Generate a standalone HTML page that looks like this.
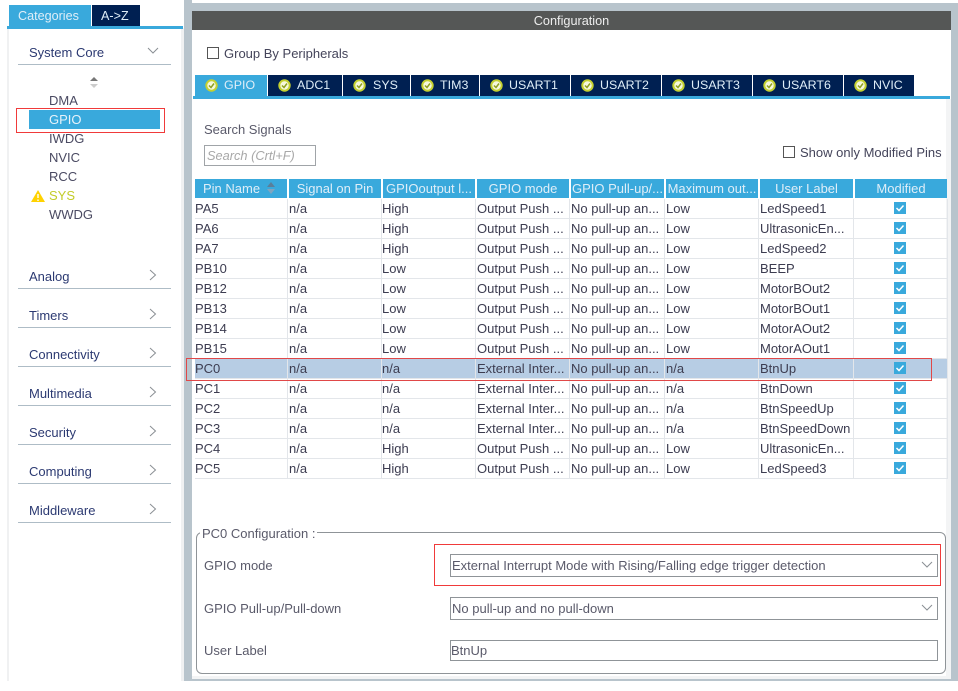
<!DOCTYPE html>
<html><head><meta charset="utf-8"><style>
html,body{margin:0;padding:0;background:#fff}
#p{position:relative;width:958px;height:691px;overflow:hidden;background:#fff;font-family:"Liberation Sans",Arial,sans-serif;font-size:13px;color:#3c3f58}
#p div,#p span,#p svg{position:absolute;white-space:nowrap;box-sizing:border-box}
.b{background:#39a9dc}
.n{background:#002052}
.t{height:21px;top:75px;color:#dfeef8;line-height:21px;font-size:12.4px;letter-spacing:.05px}
.t span{top:0}
.t svg{top:3px;left:10px}
.cat{left:29px;color:#2c3a72;font-size:13px;line-height:16px;margin-top:1px}
.ln{left:18px;width:153px;height:1px;background:#aebcc6}
.it{left:49px;font-size:13px;line-height:16px;color:#4a4a62;margin-top:1px}
.h{top:179px;height:19px;background:#39a9dc;color:#dfeef8;text-align:center;line-height:19px;font-size:13px}
.r{left:195px;width:753px;height:20px;border-bottom:1px solid #e3e6ea}
.r span{top:0;line-height:19px;font-size:13px;color:#3c3c50}
.r span:nth-child(1){left:0}
.r span:nth-child(2){left:94px}
.r span:nth-child(3){left:187px}
.r span:nth-child(4){left:282px}
.r span:nth-child(5){left:376px}
.r span:nth-child(6){left:471px}
.r span:nth-child(7){left:565px}
.r i{position:absolute;width:12px;height:12px;left:699px;top:3px;background:#39a9dc}
.r svg{left:699px;top:3px}
.v{top:199px;width:1px;height:280px;background:#e3e6ea}
.f{color:#5a5a6a;font-size:13px;line-height:16px;margin-top:1px}
.box{border:1px solid #8f9498;background:#fff;margin-top:0}
</style></head><body><div id="p">
<svg width="0" height="0"><defs>
<g id="c"><circle cx="6.5" cy="7.500" r="5.200" fill="#f6f8dc" stroke="#c4d030" stroke-width="2"/><path d="M4 7.500L6 9.500L9 5.500" fill="none" stroke="#8fa020" stroke-width="1.500"/></g>
<path id="k" d="M2.500 6L5 8.500L9.500 3.500" fill="none" stroke="#fff" stroke-width="1.500"/>
</defs></svg>
<div style="left:184px;top:0;width:8px;height:681px;background:#b8c4cc"></div>
<div style="left:184px;top:3px;width:774px;height:8px;background:#b8c4cc"></div>
<div style="left:951px;top:3px;width:7px;height:678px;background:#b8c4cc"></div>
<div style="left:192px;top:679px;width:766px;height:2px;background:#b8c4cc"></div>
<div style="left:192px;top:676px;width:759px;height:3px;background:#f3f4f5"></div>
<div style="left:946px;top:99px;width:5px;height:577px;background:#f3f4f5"></div>
<div style="left:7px;top:28px;width:2px;height:653px;background:#f0f1f2"></div>
<div style="left:181px;top:28px;width:3px;height:653px;background:#f0f1f2"></div>

<div class="b" style="left:9px;top:5px;width:82px;height:21px;color:#dfeef8;font-size:12.600px;line-height:22px;padding-left:9px">Categories</div>
<div class="n" style="left:92px;top:5px;width:48px;height:21px;color:#dfeef8;font-size:12.600px;line-height:22px;padding-left:9px">A-&gt;Z</div>
<div class="b" style="left:7px;top:26px;width:176px;height:3px"></div>

<div class="cat" style="top:44px">System Core</div>
<svg style="left:147px;top:47px" width="12" height="8"><path d="M1 1L6 6L11 1" fill="none" stroke="#8a8f94" stroke-width="1"/></svg>
<div class="ln" style="top:64px"></div>
<svg style="left:88px;top:76px" width="12" height="13"><path d="M6 1L10 5H2Z" fill="#777"/><path d="M6 12L10 8H2Z" fill="#ccc"/></svg>
<div class="it" style="top:92px">DMA</div>
<div class="b" style="left:29px;top:110px;width:131px;height:19px"></div>
<div class="it" style="top:111px;color:#e6f2fa">GPIO</div>
<div style="left:16px;top:108px;width:149px;height:25px;border:1px solid #f03a3a"></div>
<div class="it" style="top:130px">IWDG</div>
<div class="it" style="top:149px">NVIC</div>
<div class="it" style="top:168px">RCC</div>
<svg style="left:31px;top:190px" width="14" height="12"><path d="M7 0L14 12H0Z" fill="#ffd200"/><path d="M7 4V8M7 9.500V11" stroke="#fff" stroke-width="1.400"/></svg>
<div class="it" style="top:187px;color:#c3cc28">SYS</div>
<div class="it" style="top:206px">WWDG</div>

<div class="cat" style="top:268px">Analog</div><div class="ln" style="top:288px"></div>
<div class="cat" style="top:307px">Timers</div><div class="ln" style="top:327px"></div>
<div class="cat" style="top:346px">Connectivity</div><div class="ln" style="top:366px"></div>
<div class="cat" style="top:385px">Multimedia</div><div class="ln" style="top:405px"></div>
<div class="cat" style="top:424px">Security</div><div class="ln" style="top:444px"></div>
<div class="cat" style="top:463px">Computing</div><div class="ln" style="top:483px"></div>
<div class="cat" style="top:502px">Middleware</div><div class="ln" style="top:522px"></div>
<svg style="left:149px;top:269px" width="8" height="246"><g fill="none" stroke="#8a8f94"><path d="M1 1L6.500 6L1 11"/><path d="M1 40L6.500 45L1 50"/><path d="M1 79L6.500 84L1 89"/><path d="M1 118L6.500 123L1 128"/><path d="M1 157L6.500 162L1 167"/><path d="M1 196L6.500 201L1 206"/><path d="M1 235L6.500 240L1 245"/></g></svg>

<div style="left:192px;top:11px;width:759px;height:19px;background:#555756;color:#eee;text-align:center;line-height:20px;font-size:12.700px">Configuration</div>
<div style="left:207px;top:47px;width:12px;height:12px;border:1px solid #555"></div>
<div class="f" style="left:224px;top:45px;color:#44445a">Group By Peripherals</div>

<div class="b t" style="left:195px;width:72px"><svg width="14" height="14"><use href="#c"/></svg><span style="left:29px">GPIO</span></div>
<div class="n t" style="left:268px;width:74px"><svg width="14" height="14"><use href="#c"/></svg><span style="left:29px">ADC1</span></div>
<div class="n t" style="left:343px;width:67px"><svg width="14" height="14"><use href="#c"/></svg><span style="left:30px">SYS</span></div>
<div class="n t" style="left:411px;width:68px"><svg width="14" height="14"><use href="#c"/></svg><span style="left:29px">TIM3</span></div>
<div class="n t" style="left:480px;width:90px"><svg width="14" height="14"><use href="#c"/></svg><span style="left:29px">USART1</span></div>
<div class="n t" style="left:571px;width:90px"><svg width="14" height="14"><use href="#c"/></svg><span style="left:29px">USART2</span></div>
<div class="n t" style="left:662px;width:90px"><svg width="14" height="14"><use href="#c"/></svg><span style="left:29px">USART3</span></div>
<div class="n t" style="left:753px;width:90px"><svg width="14" height="14"><use href="#c"/></svg><span style="left:29px">USART6</span></div>
<div class="n t" style="left:844px;width:70px"><svg width="14" height="14"><use href="#c"/></svg><span style="left:29px">NVIC</span></div>
<div class="b" style="left:193px;top:96px;width:757px;height:3px"></div>

<div class="f" style="left:204px;top:121px">Search Signals</div>
<div style="left:204px;top:145px;width:112px;height:21px;border:1px solid #a0a4a8;color:#a8a8a8;font-style:italic;font-size:12.800px;line-height:19px;padding-left:2px">Search (Crtl+F)</div>
<div style="left:783px;top:146px;width:12px;height:12px;border:1px solid #555"></div>
<div class="f" style="left:800px;top:144px;color:#44445a">Show only Modified Pins</div>

<div class="h" style="left:195px;width:92px;text-align:left;padding-left:8px">Pin Name</div>
<svg style="left:266px;top:181px" width="10" height="14"><path d="M5 1L9 6H1Z" fill="#5a7f9a"/><path d="M5 13L9 8H1Z" fill="#7fa5c0"/></svg>
<div class="h" style="left:289px;width:92px">Signal on Pin</div>
<div class="h" style="left:383px;width:92px">GPIOoutput l...</div>
<div class="h" style="left:477px;width:92px">GPIO mode</div>
<div class="h" style="left:571px;width:93px">GPIO Pull-up/...</div>
<div class="h" style="left:666px;width:92px">Maximum out...</div>
<div class="h" style="left:760px;width:93px">User Label</div>
<div class="h" style="left:855px;width:92px">Modified</div>

<div style="left:195px;top:358px;width:753px;height:20px;background:#b7cde4"></div>

<div class="r" style="top:199px"><span>PA5</span><span>n/a</span><span>High</span><span>Output Push ...</span><span>No pull-up an...</span><span>Low</span><span>LedSpeed1</span><i></i><svg width="12" height="12"><use href="#k"/></svg></div>
<div class="r" style="top:219px"><span>PA6</span><span>n/a</span><span>High</span><span>Output Push ...</span><span>No pull-up an...</span><span>Low</span><span>UltrasonicEn...</span><i></i><svg width="12" height="12"><use href="#k"/></svg></div>
<div class="r" style="top:239px"><span>PA7</span><span>n/a</span><span>High</span><span>Output Push ...</span><span>No pull-up an...</span><span>Low</span><span>LedSpeed2</span><i></i><svg width="12" height="12"><use href="#k"/></svg></div>
<div class="r" style="top:259px"><span>PB10</span><span>n/a</span><span>Low</span><span>Output Push ...</span><span>No pull-up an...</span><span>Low</span><span>BEEP</span><i></i><svg width="12" height="12"><use href="#k"/></svg></div>
<div class="r" style="top:279px"><span>PB12</span><span>n/a</span><span>Low</span><span>Output Push ...</span><span>No pull-up an...</span><span>Low</span><span>MotorBOut2</span><i></i><svg width="12" height="12"><use href="#k"/></svg></div>
<div class="r" style="top:299px"><span>PB13</span><span>n/a</span><span>Low</span><span>Output Push ...</span><span>No pull-up an...</span><span>Low</span><span>MotorBOut1</span><i></i><svg width="12" height="12"><use href="#k"/></svg></div>
<div class="r" style="top:319px"><span>PB14</span><span>n/a</span><span>Low</span><span>Output Push ...</span><span>No pull-up an...</span><span>Low</span><span>MotorAOut2</span><i></i><svg width="12" height="12"><use href="#k"/></svg></div>
<div class="r" style="top:339px"><span>PB15</span><span>n/a</span><span>Low</span><span>Output Push ...</span><span>No pull-up an...</span><span>Low</span><span>MotorAOut1</span><i></i><svg width="12" height="12"><use href="#k"/></svg></div>
<div class="r" style="top:359px"><span>PC0</span><span>n/a</span><span>n/a</span><span>External Inter...</span><span>No pull-up an...</span><span>n/a</span><span>BtnUp</span><i></i><svg width="12" height="12"><use href="#k"/></svg></div>
<div class="r" style="top:379px"><span>PC1</span><span>n/a</span><span>n/a</span><span>External Inter...</span><span>No pull-up an...</span><span>n/a</span><span>BtnDown</span><i></i><svg width="12" height="12"><use href="#k"/></svg></div>
<div class="r" style="top:399px"><span>PC2</span><span>n/a</span><span>n/a</span><span>External Inter...</span><span>No pull-up an...</span><span>n/a</span><span>BtnSpeedUp</span><i></i><svg width="12" height="12"><use href="#k"/></svg></div>
<div class="r" style="top:419px"><span>PC3</span><span>n/a</span><span>n/a</span><span>External Inter...</span><span>No pull-up an...</span><span>n/a</span><span>BtnSpeedDown</span><i></i><svg width="12" height="12"><use href="#k"/></svg></div>
<div class="r" style="top:439px"><span>PC4</span><span>n/a</span><span>High</span><span>Output Push ...</span><span>No pull-up an...</span><span>Low</span><span>UltrasonicEn...</span><i></i><svg width="12" height="12"><use href="#k"/></svg></div>
<div class="r" style="top:459px"><span>PC5</span><span>n/a</span><span>High</span><span>Output Push ...</span><span>No pull-up an...</span><span>Low</span><span>LedSpeed3</span><i></i><svg width="12" height="12"><use href="#k"/></svg></div>

<div class="v" style="left:287px"></div><div class="v" style="left:381px"></div><div class="v" style="left:475px"></div><div class="v" style="left:569px"></div><div class="v" style="left:664px"></div><div class="v" style="left:758px"></div><div class="v" style="left:853px"></div><div class="v" style="left:947px"></div>
<div style="left:186px;top:358px;width:746px;height:23px;border:1px solid #e04848"></div>

<div style="left:196px;top:532px;width:750px;height:142px;border:1px solid #8f9498;border-radius:6px"></div>
<div class="f" style="left:200px;top:525px;background:#fff;padding:0 2px 0 2px">PC0 Configuration :</div>
<div class="f" style="left:204px;top:557px">GPIO mode</div>
<div class="f" style="left:204px;top:600px">GPIO Pull-up/Pull-down</div>
<div class="f" style="left:204px;top:642px">User Label</div>
<div class="box f" style="left:450px;top:554px;width:488px;height:23px;line-height:21px;padding-left:1px">External Interrupt Mode with Rising/Falling edge trigger detection</div>
<div class="box f" style="left:450px;top:597px;width:488px;height:23px;line-height:21px;padding-left:1px">No pull-up and no pull-down</div>
<div class="box f" style="left:450px;top:640px;width:488px;height:21px;line-height:19px;padding-left:0">BtnUp</div>
<svg style="left:921px;top:561px" width="12" height="8"><path d="M1 1L6 6L11 1" fill="none" stroke="#8a8f94"/></svg>
<svg style="left:921px;top:604px" width="12" height="8"><path d="M1 1L6 6L11 1" fill="none" stroke="#8a8f94"/></svg>
<div style="left:434px;top:544px;width:507px;height:42px;border:1px solid #f03a3a"></div>
</div></body></html>
